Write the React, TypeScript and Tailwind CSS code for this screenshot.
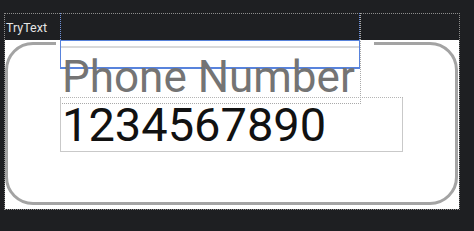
import React from "react"

const roboto = { fontFamily: "Roboto, 'Noto Sans', sans-serif" }

function HintLabel() {
  return (
    <div className="flex flex-col w-[301px] h-[91px] -mt-px border-r border-b border-dotted border-[#a9a9a9]">
      <div className="h-[27px] border-l border-r border-dotted border-[#6d8fd6]" />
      <div className="h-[29px] border border-b-2 border-[#5883dc]" />
      <div className="-mt-[11px] pl-[2px] text-[44px] leading-[38px] text-[#747474] whitespace-nowrap">
        Phone Number
      </div>
    </div>
  )
}

function PhoneField() {
  return (
    <div className="-mt-[7px] w-[343px] flex flex-col">
      <div className="border-t border-dotted border-[#b5b5b5]" />
      <div className="h-[54px] border-x border-b border-[#c9c9c9] pl-[1px] pt-[3px]">
        <div className="text-[47px] leading-[47px] text-[#111111] whitespace-nowrap">1234567890</div>
      </div>
    </div>
  )
}

export default function App() {
  return (
    <div className="w-[474px] h-[231px] bg-[#1e1f22] overflow-hidden pl-[4px] pt-[13px]" style={roboto}>
      {/* component frame */}
      <div className="relative w-[456px] h-[197px] border border-dotted border-[#8d8d8d] flex flex-col">
        <div className="h-[26px] flex items-center pl-[1px] pt-[2px] text-[12.5px] text-[#e4e4e4]">TryText</div>
        <div className="relative flex-1 bg-white">
          {/* outlined box with label notch */}
          <div className="absolute left-0 top-[2px] w-[453px] h-[163px] border-[3px] border-[#a3a3a3] rounded-[28px]" />
          <div className="absolute left-[51px] top-[1px] w-[318px] h-[6px] bg-white" />
          <div className="absolute left-[56px] top-[6px] w-[298px] h-[2px] bg-[#d9d9d9]" />
        </div>

        {/* widgets drawn on the canvas */}
        <div className="absolute inset-0 flex flex-col items-start pl-[55px]">
          <HintLabel />
          <PhoneField />
        </div>
      </div>
    </div>
  )
}
